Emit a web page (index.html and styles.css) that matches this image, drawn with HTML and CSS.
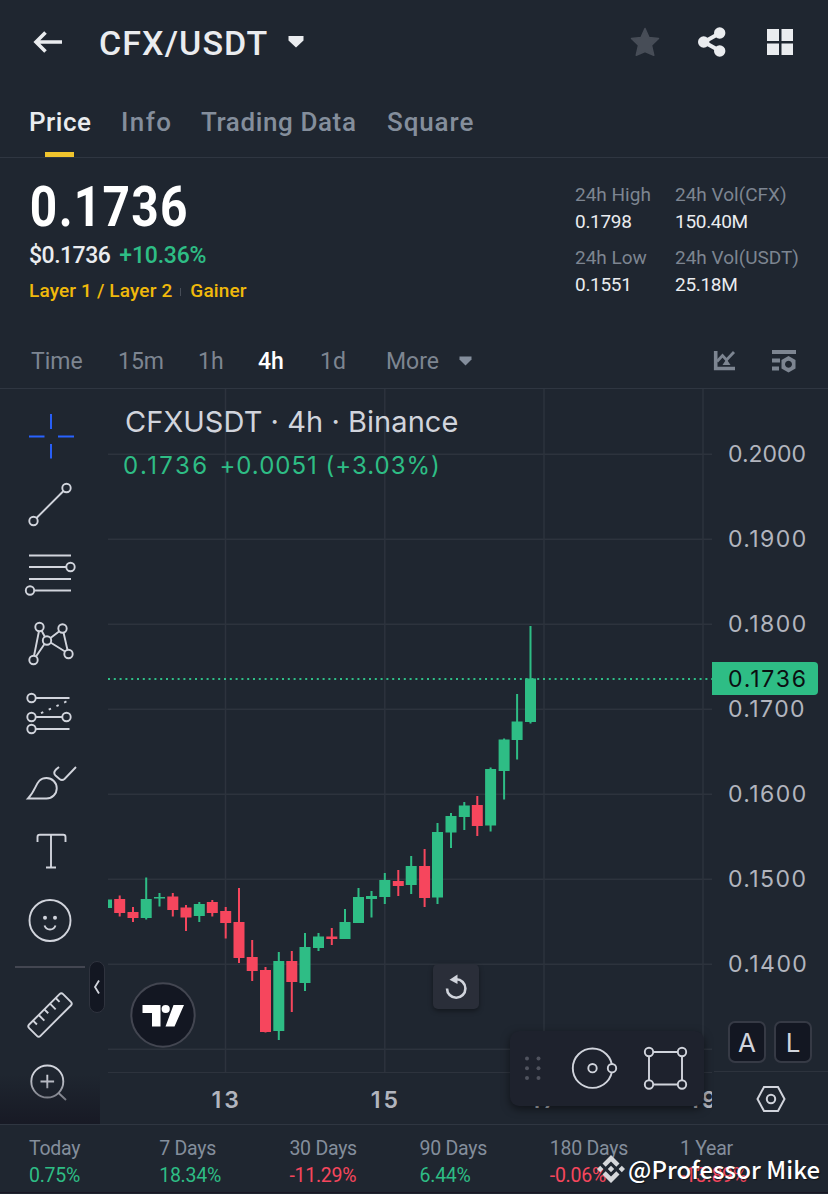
FILE: index.html
```html
<!DOCTYPE html>
<html lang="en">
<head>
  <meta charset="UTF-8">
  <meta name="viewport" content="width=device-width, initial-scale=1.0">
  <title>CFX/USDT</title>
  <link rel="stylesheet" href="styles.css">
</head>
<body>

  <header class="topbar">
    <svg class="back" width="30" height="24" viewBox="0 0 30 24"><path d="M29 12H3M12.500 2.500L3 12l9.500 9.500" fill="none" stroke="#eaecef" stroke-width="3.600"/></svg>
    <h1 class="pair">CFX/USDT</h1>
    <svg class="caret" width="16" height="12" viewBox="0 0 16 12"><path d="M.5 0h15v4.500L8 11.500.5 4.500z" fill="#eaecef"/></svg>
    <div class="actions">
      <svg width="30" height="30" viewBox="0 0 30 30"><path d="M15 1.500l4 9 9.500 1-7 6.800 2.300 10L15 24.500l-8.800 3.800 2.300-10-7-6.800 9.500-1z" fill="#474d57" stroke="#474d57" stroke-width="1.500" stroke-linejoin="round"/></svg>
      <svg width="30" height="30" viewBox="1 0 30 30"><path d="M23 6L7 15l16 9" fill="none" stroke="#eaecef" stroke-width="4"/><circle cx="22.700" cy="6" r="5.700" fill="#eaecef"/><circle cx="6.700" cy="15" r="5.700" fill="#eaecef"/><circle cx="22.700" cy="24" r="5.700" fill="#eaecef"/></svg>
      <svg width="30" height="30" viewBox="0 0 30 30"><path d="M2 2h12v12H2zM16.500 2h11.500v12H16.500zM2 16.500h12V28H2zM16.500 16.500h11.500V28H16.500z" fill="#eaecef"/></svg>
    </div>
  </header>

  <nav class="tabs">
    <a class="tab active">Price</a>
    <a class="tab info">Info</a>
    <a class="tab data">Trading Data</a>
    <a class="tab square">Square</a>
  </nav>

  <section class="summary">
    <div class="quote">
      <div class="last">0.1736</div>
      <div class="change"><span class="usd">$0.1736</span><span class="up">+10.36%</span></div>
      <div class="tags"><span class="tag-layer">Layer 1 / Layer 2</span><i></i><span class="tag-gainer">Gainer</span></div>
    </div>
    <dl class="stats">
      <div><dt>24h High</dt><dd>0.1798</dd></div>
      <div><dt>24h Vol(CFX)</dt><dd>150.40M</dd></div>
      <div><dt>24h Low</dt><dd>0.1551</dd></div>
      <div><dt>24h Vol(USDT)</dt><dd>25.18M</dd></div>
    </dl>
  </section>

  <nav class="intervals">
    <a class="i-time">Time</a>
    <a class="i-15m">15m</a>
    <a class="i-1h">1h</a>
    <a class="i-4h selected">4h</a>
    <a class="i-1d">1d</a>
    <a class="i-more">More</a>
    <svg class="more-caret" width="13" height="12" viewBox="0 0 13 12"><path d="M.5.5h12v3L6.500 9.500l-6-6z" fill="#848e9c"/></svg>
    <svg class="type" width="24" height="26" viewBox="0 0 24 26" fill="none" stroke="#7d8591"><path d="M3.700 2v17.500H23" stroke-width="3.600"/><path d="M5 12.500l5.500-6 4 4.500 7.500-8" stroke-width="2.800"/><path d="M14.500 10l4 6h-8z" fill="#7d8591" stroke="none"/></svg>
    <svg class="settings" width="26" height="28" viewBox="0 0 26 28" fill="#7d8591"><path d="M1 2h24v4H1zM1 10.500h8v4H1zM1 18.500h7v4H1z"/><path fill-rule="evenodd" d="M17.500 8l7 4v8.500l-7 4-7-4V12zm0 4.700a3.500 3.500 0 1 0 .01 0z"/></svg>
  </nav>

  <main class="chart">
    <aside class="tools">
      <svg class="tool cross" viewBox="0 0 100 69"><path d="M51 12v15M51 42v14.500M29 34.500h15.500M58 34.500h16"/></svg>
      <svg class="tool" viewBox="0 0 100 69"><path d="M36.500 47l27-27"/><circle cx="33.500" cy="50" r="4.200"/><circle cx="66.500" cy="17" r="4.200"/></svg>
      <svg class="tool" viewBox="0 0 100 69"><path d="M29 15.500h42M29 27h37M29 39h42M34.500 50.500h36.500"/><circle cx="70.500" cy="27" r="4.200"/><circle cx="30" cy="50.500" r="4.200"/></svg>
      <svg class="tool" viewBox="0 0 100 69"><path d="M41.500 21.500l3.500 6.500M39 22l-5 25M36 47.500l8.500-12.500M50.500 29l8.500-6.500M63.500 23.500l4 17.500M50.500 33.500l14.500 9"/><circle cx="39.500" cy="18" r="4.200"/><circle cx="62.500" cy="19.500" r="4.200"/><circle cx="47" cy="31.500" r="4.200"/><circle cx="68.500" cy="45" r="4.200"/><circle cx="33.500" cy="51" r="4.200"/></svg>
      <svg class="tool" viewBox="0 0 100 69"><path d="M36 20h33.500M36 39h26M36 51h33.500"/><path d="M41 35.200l26-12" stroke-dasharray="2.500 6"/><circle cx="31.500" cy="20" r="4.200"/><circle cx="31.500" cy="39" r="4.200"/><circle cx="66.500" cy="39" r="4.200"/><circle cx="31.500" cy="51" r="4.200"/></svg>
      <svg class="tool" viewBox="0 0 100 69"><path d="M28 51.500C37.500 42 35.500 31 46.500 31a10.200 10.200 0 0 1 0 20.500z"/><path d="M59 20l-3 2.500q-3.200 3.500-.5 6l4 3.500q2.500 2 5 0L76 20"/></svg>
      <svg class="tool" viewBox="0 0 100 69"><path d="M37.500 26v-5q0-2.300 2.300-2.300h23.400q2.300 0 2.300 2.300v5M51 19v32.500M46 51.500h10"/></svg>
      <svg class="tool" viewBox="0 0 100 69"><circle cx="50" cy="35.500" r="20.500"/><path d="M44.500 40.500q1.500 4 5.500 4t5.500-4"/><g class="solid"><circle cx="45" cy="32.700" r="2"/><circle cx="55" cy="32.700" r="2"/></g></svg>
      <hr class="rule">
      <svg class="tool" viewBox="0 0 100 69"><g transform="translate(50 35) rotate(-45)"><rect x="-24" y="-8" width="48" height="16" rx="2.500"/><path d="M-16-8v5.500M-8-8v8M0-8v5.500M8-8v8M16-8v5.500"/></g></svg>
      <svg class="tool" viewBox="0 0 100 69"><circle cx="47.300" cy="32.500" r="16"/><path d="M40.500 32.500h13.600M47.300 25.700v13.600M58.500 44l7.500 7"/></svg>
      <div class="fade"></div>
      <div class="collapse"><svg width="8" height="16" viewBox="0 0 8 16"><path d="M6 1.500L2 8l4 6.500" fill="none" stroke="#d1d4dc" stroke-width="1.800"/></svg></div>
    </aside>

    <div class="plot">
      <svg class="candles" id="candles" width="604" height="683" viewBox="108 389 604 683"></svg>
      <div class="legend">
        <div class="symbol">CFXUSDT · 4h · Binance</div>
        <div class="ohlc"><span class="ohlc-last">0.1736</span><span>+0.0051 (+3.03%)</span></div>
      </div>
      <div class="times"><span>13</span><span>15</span><span>17</span><span>19</span></div>
      <svg class="tv" width="66" height="66" viewBox="0 0 66 66"><circle cx="33" cy="33" r="31.700" fill="#131722" stroke="#434651" stroke-width="2"/><path d="M12.500 23h18v21.500H22V31h-9.500zM43.500 23H54l-9.500 21.500H35.500z" fill="#fff"/><circle cx="35.700" cy="27" r="4.100" fill="#fff"/></svg>
      <div class="reset"><svg width="24" height="26" viewBox="0 0 24 26"><path d="M3 14.500a9.200 9.200 0 1 0 9.200-9.200" fill="none" stroke="#d1d4dc" stroke-width="2.600"/><path d="M13.500.5v9.500L5.500 5.800z" fill="#d1d4dc"/></svg></div>
      <div class="floating">
        <svg width="194" height="75" viewBox="0 0 194 75">
          <g fill="#50535e"><circle cx="17" cy="27.500" r="2"/><circle cx="28.500" cy="27.500" r="2"/><circle cx="17" cy="37.200" r="2"/><circle cx="28.500" cy="37.200" r="2"/><circle cx="17" cy="47" r="2"/><circle cx="28.500" cy="47" r="2"/></g>
          <g fill="#1e222d" stroke="#d1d4dc" stroke-width="1.900"><circle cx="82.500" cy="37.200" r="19.700"/><circle cx="82.500" cy="37.200" r="4.200"/><circle cx="102" cy="37.200" r="4.200"/><path d="M139 21h33v32.500h-33z"/><circle cx="139" cy="21" r="4.200"/><circle cx="172" cy="21" r="4.200"/><circle cx="139" cy="53.500" r="4.200"/><circle cx="172" cy="53.500" r="4.200"/></g>
        </svg>
      </div>
    </div>

    <div class="scale">
      <span class="top">0.2000</span><span>0.1900</span><span>0.1800</span><span>0.1700</span><span>0.1600</span><span>0.1500</span><span>0.1400</span>
      <div class="current">0.1736</div>
      <div class="modes"><b>A</b><b>L</b></div>
      <div class="corner"><svg width="30" height="28" viewBox="0 0 30 28" fill="none" stroke="#d1d4dc" stroke-width="2"><path d="M8 2h14l6.500 12L22 26H8L1.500 14z"/><circle cx="15" cy="14" r="4.200"/></svg></div>
    </div>
  </main>

  <footer class="periods">
    <div><span>Today</span><em class="up">0.75%</em></div>
    <div><span>7 Days</span><em class="up">18.34%</em></div>
    <div><span>30 Days</span><em class="down">-11.29%</em></div>
    <div><span>90 Days</span><em class="up">6.44%</em></div>
    <div><span>180 Days</span><em class="down">-0.06%</em></div>
    <div><span>1 Year</span><em class="down">-13.89%</em></div>
  </footer>

  <div class="credit">
    <svg width="28" height="28" viewBox="0 0 28 28" fill="#d5d7da"><path d="M14 0l8.500 8.500-3.200 3.200L14 6.400l-5.300 5.300-3.200-3.200zM14 28l8.500-8.500-3.200-3.200L14 21.600l-5.300-5.300-3.200 3.200zM14 10.800l3.200 3.200-3.200 3.200-3.200-3.200zM3.200 10.800L6.400 14l-3.200 3.200L0 14zM24.800 10.800L28 14l-3.200 3.200-3.200-3.200z"/></svg>
    <span>@Professor Mike</span>
  </div>

  <script>
    // center x, high, body top, body bottom, low, direction
    const candles = [
      [106.5, 899.5, 899.5, 908, 908, 1],
      [119.7, 895.5, 899, 913, 916.5, 0],
      [133, 907, 912, 918, 922, 0],
      [146.2, 877.5, 899, 918, 919.5, 1],
      [159.5, 893, 897, 898.5, 906.5, 1],
      [172.8, 893, 896.5, 910, 916.5, 0],
      [186, 905, 907.5, 917.5, 931, 0],
      [199.3, 902, 904, 916, 922, 1],
      [212.3, 900, 902, 913, 916.5, 0],
      [225.7, 907, 911, 923, 938.5, 0],
      [239, 888, 922, 958, 963, 0],
      [252.2, 940, 957, 971, 981, 0],
      [265.5, 967, 970, 1032, 1032.5, 0],
      [278.8, 952, 961, 1031, 1040, 1],
      [291.8, 951, 961, 982, 1012, 0],
      [305, 933, 947, 983, 991, 1],
      [318.5, 933, 936.5, 948, 951, 1],
      [331.8, 928, 936.5, 939, 945, 0],
      [345, 909, 922, 939, 939, 1],
      [358.5, 888, 897, 923, 923, 1],
      [371.5, 891, 896, 899, 917.5, 1],
      [384.8, 873, 880, 897, 904, 1],
      [398.3, 870, 881, 886, 896, 0],
      [411.2, 856, 866, 885, 894, 1],
      [424.6, 849, 866, 898, 907, 0],
      [437.5, 823, 832, 897.5, 904, 1],
      [451, 813, 816, 832.5, 848, 1],
      [464.3, 802, 805.5, 817, 830, 1],
      [477.3, 796, 805, 826, 836, 0],
      [490.6, 767.5, 769, 825.5, 831.5, 1],
      [504.1, 738.5, 739.5, 771, 799.5, 1],
      [517.1, 694, 721.5, 740, 759.5, 1],
      [530.5, 626, 678.5, 722, 723.5, 1]
    ];

    let svg = "";
    // grid
    [454, 539, 624, 709, 794, 879, 964, 1049].forEach(y => {
      svg += `<path class="grid" d="M108 ${y + 0.3}H712"/>`;
    });
    [225.5, 384.8, 544, 703].forEach(x => {
      svg += `<path class="grid" d="M${x} 389V1072"/>`;
    });
    svg += '<path class="last-line" d="M108 679H712"/>';
    candles.forEach(([x, high, top, bottom, low, up]) => {
      svg += `<g class="${up ? "rise" : "drop"}">
        <rect x="${x - 1}" y="${high}" width="2" height="${low - high}"/>
        <rect x="${x - 5.5}" y="${top}" width="11" height="${bottom - top}"/></g>`;
    });
    document.getElementById("candles").innerHTML = svg;
  </script>
</body>
</html>
```
FILE: styles.css
```css
* {
  box-sizing: border-box;
}

body {
  position: relative;
  margin: 0;
  width: 828px;
  height: 1194px;
  overflow: hidden;
  background: #1f2630;
  color: #eaecef;
  font-family: Roboto, "Noto Sans", sans-serif;
}

svg {
  display: block;
  flex: none;
}

.up {
  color: #2ebd85;
}

.down {
  color: #f6465d;
}

/* top bar */
.topbar {
  display: flex;
  align-items: center;
  height: 84px;
  padding: 0 33px;
}

.pair {
  width: 169px;
  margin: 2px 20px 0 36px;
  font-size: 34px;
  font-weight: 500;
  letter-spacing: 1.1px;
  white-space: nowrap;
}

.actions {
  display: flex;
  gap: 37.500px;
  margin-left: auto;
}

.tabs {
  display: flex;
  height: 74px;
  padding-left: 29px;
  border-bottom: 1px solid #2f3641;
}

.tab {
  position: relative;
  height: 73px;
  margin-right: 30px;
  font-size: 26px;
  font-weight: 500;
  line-height: 76px;
  letter-spacing: .6px;
  color: #848e9c;
  white-space: nowrap;
}

.tab.active {
  width: 62px;
  letter-spacing: .5px;
  color: #eaecef;
}

.tab.active::after {
  content: "";
  position: absolute;
  left: 16px;
  bottom: 0;
  width: 29px;
  height: 5px;
  background: #f0c42d;
}

.info {
  width: 50px;
  letter-spacing: 1.400px;
}

.data {
  width: 156px;
}

.square {
  letter-spacing: .9px;
}

/* price summary */
.summary {
  display: flex;
  justify-content: space-between;
  height: 177px;
  padding: 19px 29px 0;
}

.last {
  height: 60px;
  line-height: 60px;
  padding-left: 1px;
  font-size: 55px;
  font-weight: 700;
  letter-spacing: 1.500px;
  color: #fff;
  transform: scaleX(.87);
  transform-origin: left;
}

.change {
  display: flex;
  gap: 9px;
  height: 37px;
  line-height: 37px;
  font-size: 23px;
  font-weight: 500;
  letter-spacing: -.2px;
}

.usd {
  letter-spacing: -.5px;
}

.tags {
  display: flex;
  align-items: center;
  height: 32px;
  font-size: 19px;
  font-weight: 500;
  letter-spacing: .15px;
  color: #f0b90b;
}

.tags i {
  width: 1px;
  height: 8px;
  margin: 4px 9px 0 8px;
  background: #474d57;
}

.stats {
  display: grid;
  grid-template-columns: 100px 124px;
  grid-auto-rows: 63px;
  margin: 4px 0 0;
  font-size: 19px;
  white-space: nowrap;
}

.stats div {
  line-height: 28px;
}

.stats dt {
  color: #7d8591;
}

.stats dd {
  margin: 0;
  line-height: 25px;
  letter-spacing: -.3px;
}

/* intervals */
.intervals {
  display: flex;
  align-items: center;
  height: 54px;
  padding: 0 31px 0 31px;
  border-bottom: 1px solid #2f3641;
  font-size: 23px;
  color: #7d8591;
}

.i-time { width: 87px; }
.i-15m { width: 80px; }
.i-1h { width: 60px; }
.i-4h { width: 62px; }
.i-1d { width: 66px; }
.i-more { width: 73px; }

.selected {
  color: #fff;
  font-weight: 500;
}

.type {
  margin-left: auto;
}

.settings {
  margin-left: 35px;
}

/* chart */
.chart {
  display: flex;
  height: 736px;
  border-bottom: 1px solid #2f3641;
}

.tools {
  position: relative;
  width: 100px;
  padding-top: 13px;
}

.tool {
  width: 100px;
  height: 69px;
  fill: none;
  stroke: #d1d4dc;
  stroke-width: 1.900;
}

.tool .solid {
  fill: #d1d4dc;
  stroke: none;
}

.cross {
  stroke: #2962ff;
}

.rule {
  width: 70px;
  height: 2px;
  margin: 12px 15px;
  border: 0;
  background: #434651;
}

.fade {
  position: absolute;
  left: 0;
  bottom: 0;
  width: 100px;
  height: 50px;
  background: linear-gradient(rgba(23, 25, 36, 0), rgba(23, 25, 36, .95));
}

.collapse {
  position: absolute;
  top: 572px;
  left: 89px;
  display: flex;
  align-items: center;
  justify-content: center;
  width: 16px;
  height: 52px;
  border: 1px solid #2f333e;
  border-radius: 8px;
  background: #131722;
}

.plot {
  position: relative;
  width: 604px;
  margin-left: 8px;
}

.grid {
  stroke: #2d333d;
  stroke-width: 1.500;
}

.last-line {
  stroke: #2ebd85;
  stroke-width: 2;
  stroke-dasharray: 2 3.800;
}

.rise {
  fill: #2ebd85;
}

.drop {
  fill: #f6465d;
}

.legend {
  position: absolute;
  top: 12px;
  left: 15px;
  font-family: Inter, sans-serif;
  white-space: nowrap;
}

.symbol {
  height: 42px;
  line-height: 42px;
  padding-left: 2px;
  font-size: 29px;
  letter-spacing: .05px;
  color: #d1d4dc;
}

.ohlc {
  display: flex;
  gap: 10px;
  height: 44px;
  line-height: 46px;
  font-size: 24px;
  letter-spacing: 1px;
  color: #2ebd85;
}

.ohlc-last {
  letter-spacing: 2.400px;
}

.times {
  display: flex;
  height: 52px;
  padding-left: 39px;
  border-top: 1px solid #2d333d;
  overflow: hidden;
  font-family: Inter, sans-serif;
  font-size: 23px;
  font-weight: 600;
  line-height: 54px;
  letter-spacing: 3px;
  color: #b2b5be;
}

.times span {
  flex: none;
  width: 159.200px;
  text-align: center;
}

.tv {
  position: absolute;
  top: 593px;
  left: 22px;
}

.reset {
  position: absolute;
  top: 575px;
  left: 325px;
  display: flex;
  align-items: center;
  justify-content: center;
  width: 46px;
  height: 45px;
  border-radius: 5px;
  background: #2a2e39;
  box-shadow: 0 2px 5px rgba(0, 0, 0, .4);
}

.floating {
  position: absolute;
  top: 642px;
  left: 402px;
  border-radius: 9px;
  background: #1e222d;
  box-shadow: 0 3px 8px rgba(0, 0, 0, .5);
}

.scale {
  position: relative;
  display: flex;
  flex-direction: column;
  width: 116px;
  padding-top: 23px;
  font-family: Inter, sans-serif;
  font-size: 23px;
  letter-spacing: 1.400px;
  color: #b2b5be;
}

.scale span {
  height: 85px;
  padding-left: 16px;
  line-height: 85px;
}

.scale .top {
  letter-spacing: 0;
}

.current {
  position: absolute;
  top: 273px;
  left: 0;
  width: 106px;
  height: 33px;
  padding-left: 16px;
  border-radius: 0 4px 4px 0;
  background: #2ebd85;
  color: #0b0e11;
  line-height: 34px;
  letter-spacing: 1.800px;
}

.modes {
  display: flex;
  gap: 8px;
  margin-top: 14px;
  padding-left: 16px;
}

.modes b {
  width: 38px;
  height: 42px;
  border: 2px solid #363a45;
  border-radius: 7px;
  background: #131722;
  color: #d1d4dc;
  font-size: 26px;
  font-weight: 400;
  line-height: 39px;
  letter-spacing: 0;
  text-align: center;
}

.corner {
  height: 53px;
  margin: 8px 0 0 2px;
  padding: 13px 0 0 42px;
  border-top: 1px solid #2d333d;
}

/* performance */
.periods {
  display: grid;
  grid-template-columns: repeat(6, 130.200px);
  height: 68px;
  padding: 10px 0 0 29px;
  overflow: hidden;
  border-bottom: 1px solid #1a1624;
  font-size: 19.500px;
  letter-spacing: -.25px;
}

.periods span,
.periods em {
  display: block;
  line-height: 27px;
  font-style: normal;
}

.periods span {
  color: #848e9c;
}

.credit {
  position: absolute;
  top: 1151px;
  left: 597px;
  display: flex;
  align-items: center;
  gap: 3px;
  height: 36px;
  color: #fff;
  font-family: "Noto Sans CJK SC", sans-serif;
  font-size: 24px;
  font-weight: 500;
  line-height: 36px;
  letter-spacing: .05px;
  white-space: nowrap;
  text-shadow: 1px 1px 1px rgba(0, 0, 0, .5);
}
```
